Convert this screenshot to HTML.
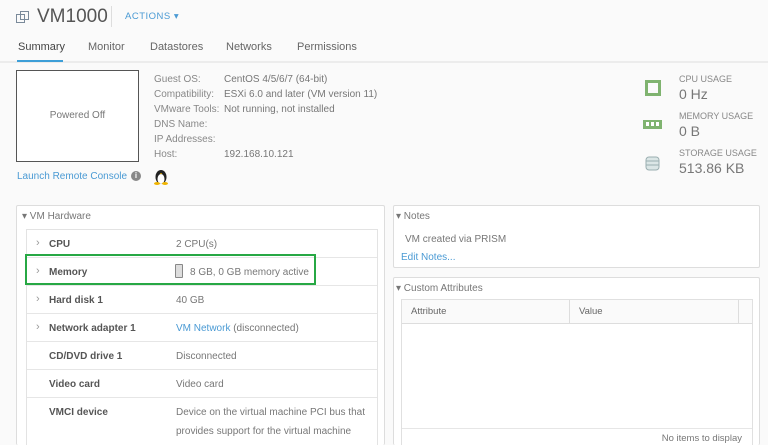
<!DOCTYPE html>
<html style="width:768px;height:445px;overflow:hidden"><head><meta charset="utf-8"><style>
*{margin:0;padding:0;box-sizing:border-box}
body{width:768px;height:445px;overflow:hidden;background:#fafafa;font-family:"Liberation Sans",sans-serif;color:#565656;position:relative}
.a{position:absolute;white-space:nowrap}
.t{font-size:10px;color:#666}
.panel{position:absolute;background:#fff;border:1px solid #ddd;border-bottom:none;border-radius:2px;overflow:hidden}
.row{position:absolute;left:0;right:0;height:28px;border-bottom:1px solid #e6e6e6;font-size:10px}
.row b{position:absolute;left:22px;top:9px;font-weight:bold;color:#555}
.row span{position:absolute;left:149px;top:9px;color:#777}
.row i{position:absolute;left:9px;top:7px;font-style:normal;color:#999;font-size:11px}
</style></head><body>
<svg class="a" style="left:16px;top:10px" width="14" height="14" viewBox="0 0 14 14"><rect x="0.5" y="4.5" width="8" height="8" fill="none" stroke="#7a8a9a"/><rect x="4.5" y="1.5" width="8" height="8" fill="none" stroke="#7a8a9a"/></svg>
<div class="a" style="left:37px;top:6px;font-size:19px;color:#555">VM1000</div>
<div class="a" style="left:111px;top:6px;width:1px;height:21px;background:#ddd"></div>
<div class="a" style="left:125px;top:11px;font-size:9.5px;color:#4a9ad4;letter-spacing:.5px">ACTIONS ▾</div>
<div class="a" style="left:18px;top:41px;font-size:11px;color:#444">Summary</div>
<div class="a" style="left:88px;top:41px;font-size:11px;color:#666">Monitor</div>
<div class="a" style="left:150px;top:41px;font-size:11px;color:#666">Datastores</div>
<div class="a" style="left:226px;top:41px;font-size:11px;color:#666">Networks</div>
<div class="a" style="left:297px;top:41px;font-size:11px;color:#666">Permissions</div>
<div class="a" style="left:0;top:61px;width:768px;height:2px;background:#ececec"></div>
<div class="a" style="left:17px;top:60px;width:46px;height:2px;background:#3d9fd8"></div>
<div class="a" style="left:16px;top:70px;width:123px;height:92px;border:1.5px solid #555;background:#fff"></div>
<div class="a t" style="left:16px;top:110px;width:123px;text-align:center;color:#777">Powered Off</div>
<div class="a t" style="left:154px;top:72px;line-height:15px;color:#888">Guest OS:<br>Compatibility:<br>VMware Tools:<br>DNS Name:<br>IP Addresses:<br>Host:</div>
<div class="a t" style="left:224px;top:72px;line-height:15px;color:#777">CentOS 4/5/6/7 (64-bit)<br>ESXi 6.0 and later (VM version 11)<br>Not running, not installed<br><br><br>192.168.10.121</div>
<div class="a t" style="left:17px;top:171px;color:#4a9ad4">Launch Remote Console</div>
<div class="a" style="left:131px;top:171px;width:10px;height:10px;border-radius:50%;background:#888;color:#fff;font-size:8px;text-align:center;line-height:10px;font-weight:bold">i</div>
<svg class="a" style="left:154px;top:168px" width="14" height="17" viewBox="0 0 14 17"><ellipse cx="7" cy="9" rx="5.5" ry="7" fill="#222"/><ellipse cx="7" cy="11" rx="3.5" ry="5" fill="#fff"/><ellipse cx="3" cy="15.5" rx="3" ry="1.5" fill="#f0b400"/><ellipse cx="11" cy="15.5" rx="3" ry="1.5" fill="#f0b400"/><path d="M6 5h2l-1 1.5z" fill="#f0b400"/></svg>
<svg class="a" style="left:645px;top:80px" width="16" height="16"><rect x="1.5" y="1.5" width="13" height="13" fill="none" stroke="#7fb36f" stroke-width="3"/></svg>
<svg class="a" style="left:643px;top:120px" width="19" height="11"><rect x="0" y="0" width="19" height="9" fill="#7fb36f"/><rect x="3" y="2" width="3" height="4" fill="#fff"/><rect x="8" y="2" width="3" height="4" fill="#fff"/><rect x="13" y="2" width="3" height="4" fill="#fff"/></svg>
<svg class="a" style="left:645px;top:155px" width="15" height="17"><rect x="1" y="2" width="13" height="13" rx="3" fill="#dbe6e6" stroke="#9aaeb0"/><path d="M1 6h13M1 10h13" stroke="#9aaeb0"/></svg>
<div class="a" style="left:679px;top:74px;font-size:9px;color:#888">CPU USAGE</div>
<div class="a" style="left:679px;top:86px;font-size:14px;color:#777">0 Hz</div>
<div class="a" style="left:679px;top:111px;font-size:9px;color:#888">MEMORY USAGE</div>
<div class="a" style="left:679px;top:123px;font-size:14px;color:#777">0 B</div>
<div class="a" style="left:679px;top:148px;font-size:9px;color:#888">STORAGE USAGE</div>
<div class="a" style="left:679px;top:160px;font-size:14px;color:#777">513.86 KB</div>

<div class="panel" style="left:16px;top:205px;width:369px;height:240px">
<div class="a" style="left:5px;top:5px;font-size:10px;color:#777">▾ VM Hardware</div>
<div class="a" style="left:9px;top:23px;width:352px;height:217px;border:1px solid #e3e3e3;border-bottom:none;overflow:hidden">
<div class="row" style="top:0"><i>›</i><b>CPU</b><span>2 CPU(s)</span></div>
<div class="row" style="top:28px"><i>›</i><b>Memory</b><span style="left:163px">8 GB, 0 GB memory active</span><div class="a" style="left:148px;top:6px;width:8px;height:14px;border:1px solid #888;background:#ddd;border-radius:1px"></div></div>
<div class="row" style="top:56px"><i>›</i><b>Hard disk 1</b><span>40 GB</span></div>
<div class="row" style="top:84px"><i>›</i><b>Network adapter 1</b><span><font color="#4a9ad4">VM Network</font> (disconnected)</span></div>
<div class="row" style="top:112px"><b>CD/DVD drive 1</b><span>Disconnected</span></div>
<div class="row" style="top:140px"><b>Video card</b><span>Video card</span></div>
<div class="row" style="top:168px;height:49px;border:none;overflow:hidden"><b>VMCI device</b><span style="line-height:19px;top:5px">Device on the virtual machine PCI bus that<br>provides support for the virtual machine<br>communication interface</span></div>
</div></div>
<div class="a" style="left:25px;top:254px;width:291px;height:31px;border:2.5px solid #27a844"></div>

<div class="panel" style="left:393px;top:205px;width:367px;height:63px;border-bottom:1px solid #ddd">
<div class="a" style="left:2px;top:5px;font-size:10px;color:#777">▾ Notes</div>
<div class="a t" style="left:11px;top:28px;color:#777">VM created via PRISM</div>
<div class="a t" style="left:7px;top:46px;color:#4a9ad4">Edit Notes...</div>
</div>
<div class="panel" style="left:393px;top:277px;width:367px;height:168px">
<div class="a" style="left:2px;top:5px;font-size:10px;color:#777">▾ Custom Attributes</div>
<div class="a" style="left:7px;top:21px;width:352px;height:147px;border:1px solid #e0e0e0;border-bottom:none;overflow:hidden">
<div class="a" style="left:0;top:0;width:350px;height:24px;background:#fafafa;border-bottom:1px solid #ddd"></div>
<div class="a" style="left:167px;top:0;width:1px;height:24px;background:#ddd"></div>
<div class="a" style="left:336px;top:0;width:1px;height:24px;background:#ddd"></div>
<div class="a" style="left:9px;top:6px;font-size:9.5px;color:#666">Attribute</div>
<div class="a" style="left:177px;top:6px;font-size:9.5px;color:#666">Value</div>
<div class="a" style="left:0;top:128px;width:350px;height:1px;background:#e6e6e6"></div>
<div class="a" style="right:10px;top:133px;font-size:9.5px;color:#777">No items to display</div>
</div></div>
</body></html>
